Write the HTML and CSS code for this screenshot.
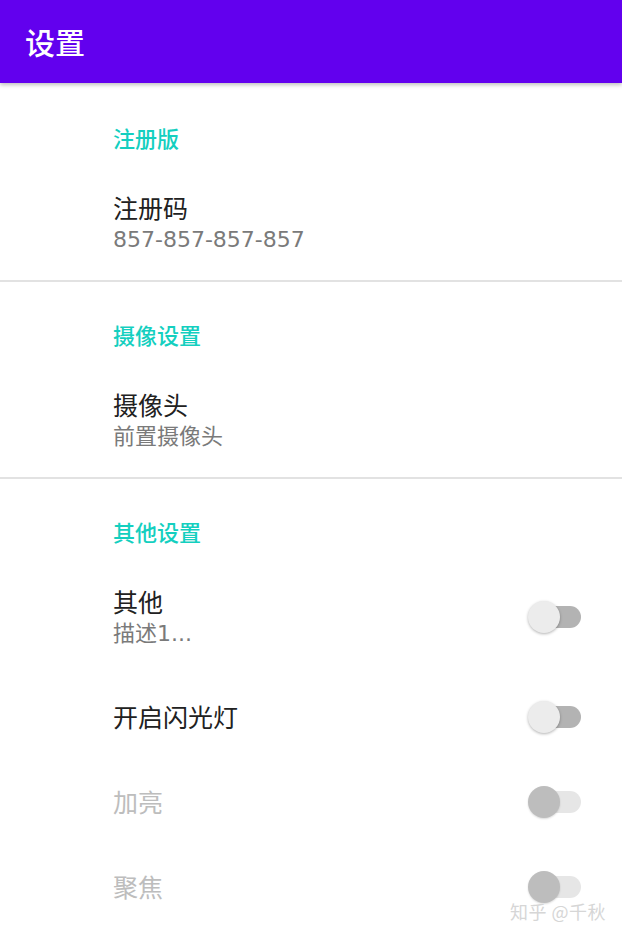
FILE: index.html
```html
<!DOCTYPE html>
<html>
<head>
    <meta charset="utf-8">
    <title>设置</title>
    <link rel="stylesheet" href="styles.css">
</head>
<body>
    <header class="app-bar">
        <h1>设置</h1>
    </header>

    <div class="settings">
        <section class="group">
            <div class="category">注册版</div>
            <div class="pref">
                <div class="pref-text">
                    <div class="pref-title">注册码</div>
                    <div class="pref-summary">857-857-857-857</div>
                </div>
            </div>
        </section>

        <section class="group">
            <div class="category">摄像设置</div>
            <div class="pref">
                <div class="pref-text">
                    <div class="pref-title">摄像头</div>
                    <div class="pref-summary">前置摄像头</div>
                </div>
            </div>
        </section>

        <section class="group">
            <div class="category">其他设置</div>
            <div class="pref">
                <div class="pref-text">
                    <div class="pref-title">其他</div>
                    <div class="pref-summary">描述1...</div>
                </div>
                <span class="switch"><span class="track"></span><span class="thumb"></span></span>
            </div>
            <div class="pref">
                <div class="pref-text">
                    <div class="pref-title">开启闪光灯</div>
                </div>
                <span class="switch"><span class="track"></span><span class="thumb"></span></span>
            </div>
            <div class="pref disabled">
                <div class="pref-text">
                    <div class="pref-title">加亮</div>
                </div>
                <span class="switch"><span class="track"></span><span class="thumb"></span></span>
            </div>
            <div class="pref disabled">
                <div class="pref-text">
                    <div class="pref-title">聚焦</div>
                </div>
                <span class="switch"><span class="track"></span><span class="thumb"></span></span>
            </div>
        </section>
    </div>

    <div class="watermark">知乎 @千秋</div>
</body>
</html>
```

FILE: styles.css
```css
html, body {
    margin: 0;
    padding: 0;
    background: #ffffff;
}
body {
    font-family: "Noto Sans CJK SC", "Noto Sans", Roboto, sans-serif;
    width: 622px;
    height: 938px;
    overflow: hidden;
    position: relative;
}
.app-bar {
    height: 83px;
    background-color: #6200ee;
    box-shadow: 0 2px 4px rgba(0, 0, 0, 0.25);
    display: flex;
    align-items: center;
    padding-left: 25px;
    position: relative;
    z-index: 1;
}
.app-bar h1 {
    margin: 0;
    color: #ffffff;
    font-size: 30px;
    font-weight: 500;
    line-height: 1;
    padding-bottom: 2px;
}
.group {
    padding-top: 39px;
}
.group + .group {
    padding-top: 37px;
    border-top: 2px solid #e2e2e2;
}
.category {
    padding-left: 113px;
    color: #14cfbf;
    font-size: 22px;
    font-weight: 500;
    line-height: 30px;
    margin-bottom: 13px;
}
.pref {
    display: flex;
    align-items: center;
    padding: 26px 41px 26px 113px;
}
.pref-text {
    flex: 1;
}
.pref-title {
    color: #212121;
    font-size: 25px;
    line-height: 33px;
}
.pref-summary {
    font-family: "DejaVu Sans", "Noto Sans CJK SC", sans-serif;
    color: #7a7a7a;
    font-size: 22px;
    line-height: 28px;
    margin-top: 2px;
}
.pref.disabled .pref-title {
    color: #bdbdbd;
}
.switch {
    position: relative;
    width: 53px;
    height: 32px;
    flex: none;
}
.switch .track {
    position: absolute;
    right: 0;
    top: 5px;
    width: 37px;
    height: 22px;
    border-radius: 11px;
    background: #b3b3b3;
}
.switch .thumb {
    position: absolute;
    left: 0;
    top: 0;
    width: 32px;
    height: 32px;
    border-radius: 50%;
    background: #ececec;
    box-shadow: 0 1px 3px rgba(0, 0, 0, 0.3);
}
.pref.disabled .switch .track {
    background: #e6e6e6;
}
.pref.disabled .switch .thumb {
    background: #bdbdbd;
    box-shadow: 0 1px 2px rgba(0, 0, 0, 0.15);
}
.watermark {
    position: absolute;
    right: 16px;
    bottom: 14px;
    color: #d6d6d6;
    font-size: 18px;
    letter-spacing: 0.5px;
    text-shadow: 0 0 1px #ffffff;
}
```
